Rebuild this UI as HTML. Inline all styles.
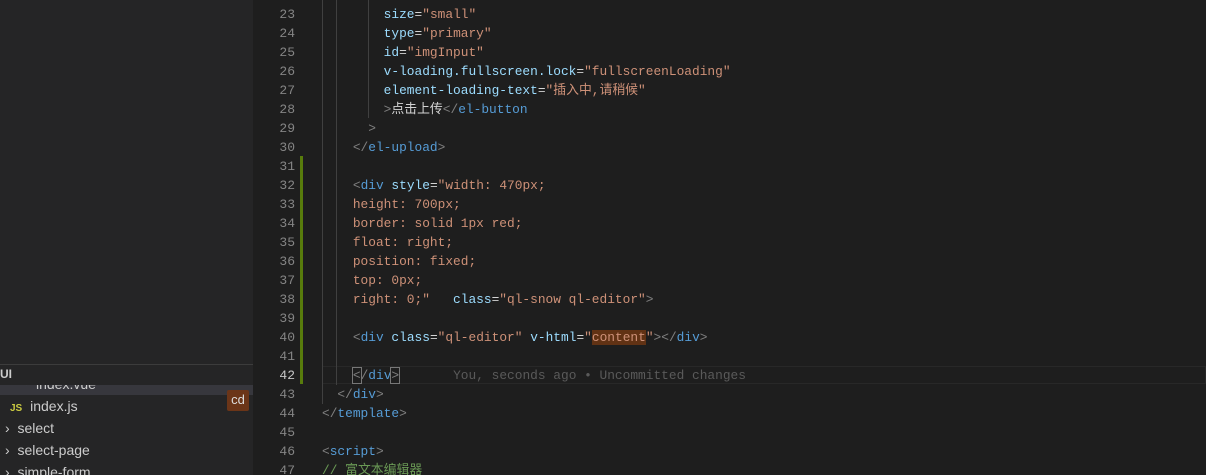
<!DOCTYPE html>
<html><head><meta charset="utf-8"><style>
html,body{margin:0;width:1206px;height:475px;background:#1e1e1e;overflow:hidden;}
body{position:relative;font-family:"Liberation Mono","Noto Sans CJK SC",monospace;}
#side{position:absolute;left:0;top:0;width:253px;height:475px;background:#252526;font-family:"Liberation Sans",sans-serif;color:#ccc;font-size:14px;}
.ln{position:absolute;left:253px;width:42px;text-align:right;color:#858585;font-size:13px;}
.code{position:absolute;left:322px;font-size:12.85px;white-space:pre;color:#d4d4d4;}
.a{color:#9cdcfe}.s{color:#ce9178}.t{color:#569cd6}.g{color:#808080}.c{color:#6a9955}
.guide{position:absolute;width:1px;background:#404040;}
</style></head><body>
<div id="side">
<div style="position:absolute;top:364px;left:0;width:253px;height:1px;background:#3c3c3c"></div>
<div style="position:absolute;top:367px;left:0;font-weight:bold;font-size:12px;color:#ccc">UI</div>
<div style="position:absolute;top:385px;left:0;width:253px;height:10px;background:#37373d;overflow:hidden"><span style="position:absolute;left:22px;top:-8px;color:#89d185;font-size:10px">▼</span><span style="position:absolute;left:36px;top:-9px;color:#ccc">index.vue</span></div>
<div style="position:absolute;top:398px;left:10px"><span style="color:#cbcb41;font-weight:bold;font-size:10px">JS</span> <span style="margin-left:4px">index.js</span></div>
<div style="position:absolute;top:420px;left:5px">›&nbsp;&nbsp;select</div>
<div style="position:absolute;top:442px;left:5px">›&nbsp;&nbsp;select-page</div>
<div style="position:absolute;top:464px;left:5px">›&nbsp;&nbsp;simple-form</div>
<div style="position:absolute;left:227px;top:390px;width:22px;height:21px;background:#6b3518;color:#ddd;font-size:13px;text-align:center;line-height:20px;border-radius:2px">cd</div>
</div>
<div style="position:absolute;left:300px;top:156px;width:3px;height:228px;background:#587c0c"></div>
<div style="position:absolute;left:322px;top:366px;width:884px;height:18px;border:1px solid #282828;box-sizing:border-box;background:#1e1e1e"></div>
<div class="guide" style="left:322px;top:0;height:404px"></div>
<div class="guide" style="left:336px;top:0;height:385px"></div>
<div class="guide" style="left:368px;top:0;height:118px"></div>
<div class="code" style="top:5px;line-height:19px">        <span class="a">size</span>=<span class="s">"small"</span>
        <span class="a">type</span>=<span class="s">"primary"</span>
        <span class="a">id</span>=<span class="s">"imgInput"</span>
        <span class="a">v-loading.fullscreen.lock</span>=<span class="s">"fullscreenLoading"</span>
        <span class="a">element-loading-text</span>=<span class="s">"插入中,请稍候"</span>
        <span class="g">&gt;</span>点击上传<span class="g">&lt;/</span><span class="t">el-button</span>
      <span class="g">&gt;</span>
    <span class="g">&lt;/</span><span class="t">el-upload</span><span class="g">&gt;</span>

    <span class="g">&lt;</span><span class="t">div</span> <span class="a">style</span>=<span class="s">"width: 470px;</span>
<span class="s">    height: 700px;</span>
<span class="s">    border: solid 1px red;</span>
<span class="s">    float: right;</span>
<span class="s">    position: fixed;</span>
<span class="s">    top: 0px;</span>
<span class="s">    right: 0;"</span>   <span class="a">class</span>=<span class="s">"ql-snow ql-editor"</span><span class="g">&gt;</span>

    <span class="g">&lt;</span><span class="t">div</span> <span class="a">class</span>=<span class="s">"ql-editor"</span> <span class="a">v-html</span>=<span class="s">"<span style="background:#613214">content</span>"</span><span class="g">&gt;&lt;/</span><span class="t">div</span><span class="g">&gt;</span>

    <span class="g" style="outline:1px solid #777">&lt;</span><span class="g">/</span><span class="t">div</span><span class="g" style="outline:1px solid #777">&gt;</span>       <span style="color:#5a5a5a">You, seconds ago • Uncommitted changes</span>
  <span class="g">&lt;/</span><span class="t">div</span><span class="g">&gt;</span>
<span class="g">&lt;/</span><span class="t">template</span><span class="g">&gt;</span>

<span class="g">&lt;</span><span class="t">script</span><span class="g">&gt;</span>
<span class="c">// 富文本编辑器</span></div>
<div class="ln" style="top:5px;line-height:19px;white-space:pre">23
24
25
26
27
28
29
30
31
32
33
34
35
36
37
38
39
40
41
<span style="color:#c6c6c6">42</span>
43
44
45
46
47</div>
</body></html>
